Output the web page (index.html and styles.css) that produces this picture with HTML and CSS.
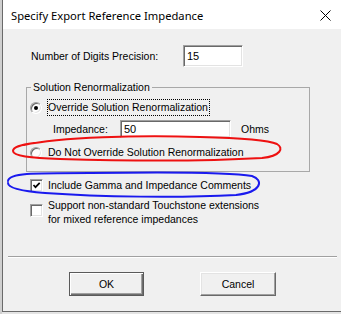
FILE: index.html
```html
<!DOCTYPE html>
<html>
<head>
<meta charset="utf-8">
<link rel="stylesheet" href="styles.css">
</head>
<body>
<div class="desk">
  <div class="edge"></div>
  <div class="window">
    <div class="titlebar">
      <span class="title">Specify Export Reference Impedance</span>
      <svg class="close" width="11" height="11" viewBox="0 0 11 11"><path d="M0.5 0.5 L10.5 10.5 M10.5 0.5 L0.5 10.5" stroke="#000" stroke-width="1" fill="none"/></svg>
    </div>
    <div class="content">
      <div class="digits-row">
        <span class="digits-label">Number of Digits Precision:</span>
        <div class="edit edit-digits">15</div>
      </div>
      <fieldset class="group">
        <legend>Solution Renormalization</legend>
        <div class="opt opt-first">
          <span class="radio checked"><span class="dot"></span></span>
          <span class="opt-text focus">Override Solution Renormalization</span>
        </div>
        <div class="imp-row">
          <span class="imp-label">Impedance:</span>
          <div class="edit edit-imp">50</div>
          <span class="ohms">Ohms</span>
        </div>
        <div class="opt opt-second">
          <span class="radio"></span>
          <span class="opt-text">Do Not Override Solution Renormalization</span>
        </div>
      </fieldset>
      <div class="check check-first">
        <span class="box"><svg width="11" height="11" viewBox="0 0 11 11"><path d="M2.5 5 L4.5 7.2 L8.7 2.8" stroke="#000" stroke-width="1.7" fill="none"/></svg></span>
        <span class="check-text">Include Gamma and Impedance Comments</span>
      </div>
      <div class="check check-second">
        <span class="box"></span>
        <span class="check-text">Support non-standard Touchstone extensions<br>for mixed reference impedances</span>
      </div>
      <div class="sep"></div>
      <div class="buttons">
        <div class="btn btn-default">OK</div>
        <div class="btn btn-cancel">Cancel</div>
      </div>
    </div>
  </div>
  <svg class="marks" width="341" height="314" viewBox="0 0 341 314">
    <path d="M24 145 C 60 137, 140 135, 200 137 C 240 138, 268 140, 277 144 C 284 148, 281 156, 262 158 C 210 161, 130 161, 60 159 C 30 158, 13 156, 13 151 C 13 147, 20 145, 34 143" stroke="#ee1111" stroke-width="2" fill="none" stroke-linecap="round"/>
    <path d="M8 181 C 9 173, 30 173, 90 173 C 160 172, 230 172, 252 176 C 264 180, 262 192, 236 195 C 180 198, 100 197, 45 193 C 20 191, 8 188, 8 183" stroke="#1a1aee" stroke-width="2" fill="none" stroke-linecap="round"/>
  </svg>
</div>
</body>
</html>
```
FILE: styles.css
```css
html, body {
  margin: 0;
  padding: 0;
}
body {
  width: 341px;
  height: 314px;
  overflow: hidden;
  background: #e4e4e4;
  font-family: "Liberation Sans", Arial, sans-serif;
  font-size: 10.5px;
  color: #000;
}
.desk {
  position: relative;
  display: flex;
  width: 341px;
  height: 314px;
}
.edge {
  width: 2px;
  background: #cfcfcf;
}
.window {
  flex: 1;
  box-sizing: border-box;
  height: 312px;
  border-left: 1px solid #6a6a6a;
  border-bottom: 1px solid #6a6a6a;
  background: #f0f0f0;
  display: flex;
  flex-direction: column;
}
.titlebar {
  height: 29px;
  background: #fff;
  display: flex;
  align-items: center;
  padding-left: 8px;
  padding-right: 10px;
}
.title {
  flex: 1;
  font-family: "Noto Sans", "Open Sans", sans-serif;
  font-size: 11.2px;
  color: #000;
  padding-top: 1px;
}
.close {
  display: block;
  margin-top: 1px;
}
.content {
  display: flex;
  flex-direction: column;
}
.digits-row {
  display: flex;
  align-items: center;
  margin-top: 16px;
  height: 22px;
  padding-left: 28px;
}
.digits-label {
  width: 152px;
}
.edit {
  box-sizing: border-box;
  background: #fff;
  border: 1px solid;
  border-color: #a0a0a0 #fff #fff #a0a0a0;
  box-shadow: inset 1px 1px 0 #696969, inset -1px -1px 0 #e3e3e3;
  padding-left: 3px;
  display: flex;
  align-items: center;
  font-size: 11px;
}
.edit-digits {
  width: 60px;
  height: 22px;
}
.group {
  margin: 14px 0 0 23px;
  width: 284px;
  box-sizing: border-box;
  border: 1px solid #a8a8a8;
  padding: 5px 0 10px 0;
  min-width: 0;
}
.group legend {
  padding: 0 2px;
  margin-left: 4px;
  line-height: 13px;
}
.opt {
  display: flex;
  align-items: center;
  height: 17px;
  padding-left: 3px;
}
.opt-second {
  margin-top: 6px;
}
.radio {
  box-sizing: border-box;
  width: 12px;
  height: 12px;
  border-radius: 50%;
  background: #fff;
  border: 1px solid;
  border-color: #a0a0a0 #fff #fff #a0a0a0;
  box-shadow: inset 1px 1px 0 #696969, inset -1px -1px 0 #e3e3e3;
  display: flex;
  align-items: center;
  justify-content: center;
}
.dot {
  width: 4px;
  height: 4px;
  border-radius: 50%;
  background: #000;
}
.opt-text {
  margin-left: 5px;
  line-height: 15px;
  border: 1px solid transparent;
  padding-right: 1px;
}
.focus {
  border: 1px dotted #000;
}
.imp-row {
  display: flex;
  align-items: center;
  height: 18px;
  margin-top: 4px;
  padding-left: 26px;
}
.imp-label {
  width: 67px;
}
.edit-imp {
  width: 111px;
  height: 18px;
}
.ohms {
  margin-left: 10px;
}
.check {
  display: flex;
  padding-left: 27px;
}
.check-first {
  margin-top: 7px;
  height: 13px;
  align-items: center;
}
.check-second {
  margin-top: 6px;
  align-items: flex-start;
}
.check-second .box {
  margin-top: 6px;
}
.box {
  box-sizing: border-box;
  width: 13px;
  height: 13px;
  background: #fff;
  border: 1px solid;
  border-color: #a0a0a0 #fff #fff #a0a0a0;
  box-shadow: inset 1px 1px 0 #696969, inset -1px -1px 0 #e3e3e3;
  display: flex;
  align-items: center;
  justify-content: center;
  flex: none;
}
.box svg {
  display: block;
}
.check-text {
  margin-left: 5px;
  line-height: 14px;
}
.check-first .check-text {
  line-height: 13px;
}
.sep {
  margin: 30px 4px 0 5px;
  height: 1px;
  background: #a0a0a0;
  border-bottom: 1px solid #fff;
}
.buttons {
  display: flex;
  margin-top: 14px;
  padding-left: 66px;
  gap: 56px;
}
.btn {
  box-sizing: border-box;
  height: 24px;
  display: flex;
  align-items: center;
  justify-content: center;
  background: #f0f0f0;
}
.btn-default {
  width: 75px;
  border: 1px solid #5a5a5a;
  box-shadow: inset 1px 1px 0 #fff, inset -1px -1px 0 #6e6e6e, inset -2px -2px 0 #a0a0a0;
}
.btn-cancel {
  width: 76px;
  border: 1px solid;
  border-color: #fff #696969 #696969 #fff;
  box-shadow: inset -1px -1px 0 #a0a0a0, inset 1px 1px 0 #e3e3e3;
}
.marks {
  position: absolute;
  left: 0;
  top: 0;
  pointer-events: none;
}
```
